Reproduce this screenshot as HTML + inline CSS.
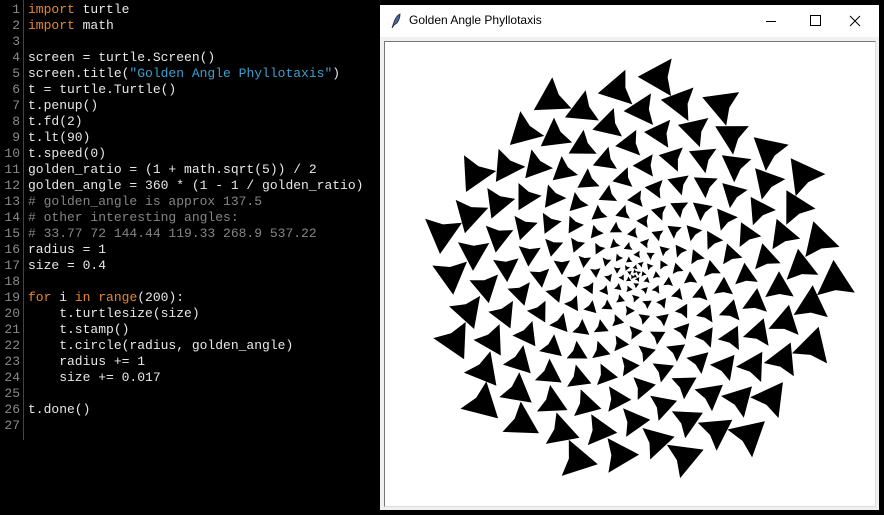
<!DOCTYPE html>
<html><head><meta charset="utf-8"><style>
body{margin:0;width:884px;height:515px;background:#000;overflow:hidden;position:relative;font-family:"Liberation Mono",monospace}
#code{position:absolute;left:0;top:2px;font-size:13px;line-height:16px;color:#e8e8e8;white-space:pre}
.ln{position:absolute;left:0;width:20px;text-align:right;color:#8a8a8a}
.tx{position:absolute;left:28px}
#sep{position:absolute;left:23px;top:0;width:1px;height:440px;background:#444}
.k{color:#e8862a}.s{color:#3aa0d0}.c{color:#858585}
#win{position:absolute;left:380px;top:5px;width:499px;height:505px;background:#f0f0f0}
#tb{position:absolute;left:0;top:0;width:499px;height:32px;background:#fff;font-family:"Liberation Sans",sans-serif;font-size:12px;color:#000}
#cv{position:absolute;left:4px;top:36px;width:490px;height:464px;background:#fff;border:1px solid #777;border-right-color:#ddd;border-bottom-color:#ddd}
</style></head><body>
<div id="sep"></div>
<div id="code"></div>
<div id="win">
<div id="tb">
<svg style="position:absolute;left:10px;top:8px" width="12" height="16" viewBox="0 0 12 16"><path d="M2 15 L4 9 Q6 3 10 1 Q10 6 7 10 L4 12 Z" fill="#4a6a9a" stroke="#223" stroke-width="0.8"/></svg>
<span style="position:absolute;left:29px;top:8px">Golden Angle Phyllotaxis</span>
<svg style="position:absolute;left:385px;top:9px" width="100" height="14"><path d="M1 7.5H11" stroke="#000"/><rect x="45.5" y="1.5" width="10" height="10" fill="none" stroke="#000"/><path d="M85 2L95 12M95 2L85 12" stroke="#000"/></svg>
</div>
<div id="cv"><svg id="sp" width="490" height="464"></svg></div>
</div>
<script>
var L=['<span class="k">import</span> turtle','<span class="k">import</span> math','','screen = turtle.Screen()','screen.title(<span class="s">"Golden Angle Phyllotaxis"</span>)','t = turtle.Turtle()','t.penup()','t.fd(2)','t.lt(90)','t.speed(0)','golden_ratio = (1 + math.sqrt(5)) / 2','golden_angle = 360 * (1 - 1 / golden_ratio)','<span class="c"># golden_angle is approx 137.5</span>','<span class="c"># other interesting angles:</span>','<span class="c"># 33.77 72 144.44 119.33 268.9 537.22</span>','radius = 1','size = 0.4','','<span class="k">for</span> i <span class="k">in</span> <span class="k">range</span>(200):','    t.turtlesize(size)','    t.stamp()','    t.circle(radius, golden_angle)','    radius += 1','    size += 0.017','','t.done()',''];
var h='';for(var i=0;i<L.length;i++){h+='<div class="ln" style="top:'+(i*16)+'px">'+(i+1)+'</div><div class="tx" style="top:'+(i*16)+'px">'+L[i]+'</div>';}
document.getElementById('code').innerHTML=h;
var cx=248,cy=232,x=2,y=0,hd=90,r=1,sz=0.4,ga=360*(1-2/(1+Math.sqrt(5))),out='';
var sh=[[0,0],[-5,-9],[0,-8],[5,-9]];
for(var n=0;n<200;n++){var e0=Math.cos(hd*Math.PI/180),e1=Math.sin(hd*Math.PI/180),p=[];
for(var j=0;j<4;j++){var a=sh[j][0]*sz,b=sh[j][1]*sz;var wx=x+e1*a+e0*b,wy=y-e0*a+e1*b;p.push((cx+wx).toFixed(1)+','+(cy-wy).toFixed(1));}
out+='<polygon points="'+p.join(' ')+'"/>';
var frac=ga/360,steps=1+Math.floor(Math.min(11+r/6,59)*frac),w=ga/steps,w2=w/2,l=2*r*Math.sin(w*Math.PI/360);
hd+=w2;for(var k=0;k<steps;k++){x+=l*Math.cos(hd*Math.PI/180);y+=l*Math.sin(hd*Math.PI/180);hd+=w;}hd-=w2;
r+=1;sz+=0.017;}
document.getElementById('sp').innerHTML='<g fill="#000">'+out+'</g>';
</script>
</body></html>
